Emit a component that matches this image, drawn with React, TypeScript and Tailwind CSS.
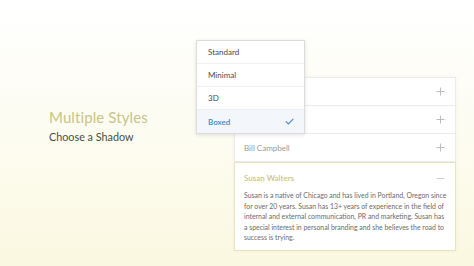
import React from 'react';

const styles = ['Standard', 'Minimal', '3D', 'Boxed'];

const people = [
  { name: 'Tom Hardy', open: false },
  { name: 'Amy Lane', open: false },
  { name: 'Bill Campbell', open: false },
];

const Plus = () => (
  <svg width="9" height="9" viewBox="0 0 9 9" className="text-[#b5b5b5]">
    <path d="M4.5 0.5v8M0.5 4.5h8" stroke="currentColor" strokeWidth="0.9" fill="none" />
  </svg>
);

const Minus = () => (
  <svg width="9" height="9" viewBox="0 0 9 9" className="text-[#c9c9c9]">
    <path d="M0.5 4.5h8" stroke="currentColor" strokeWidth="0.9" fill="none" />
  </svg>
);

const App = () => {
  return (
    <div
      className="relative w-[474px] h-[266px] overflow-hidden bg-gradient-to-b from-white via-[#fdfcf1] to-[#fbf8e0] flex items-start"
      style={{ fontFamily: 'Lato, "Open Sans", sans-serif' }}
    >
      {/* left heading */}
      <div className="w-[234px] pl-[49px] pt-[108px]">
        <h1 className="text-[15px] leading-[19px] text-[#c8c488] tracking-[0.1px]">Multiple Styles</h1>
        <p className="text-[10.8px] leading-[15px] text-[#4d4c3f] mt-[2px]">Choose a Shadow</p>
      </div>

      {/* accordion */}
      <div className="mt-[77px] w-[222px] bg-white border border-[#ececec] shadow-[0_0_4px_rgba(0,0,0,0.04)]">
        {people.map((p, i) => (
          <div key={i} className="h-[28px] flex items-center justify-between pl-[9px] pr-[10px] border-b border-[#ebebeb]">
            <span className="text-[8px] text-[#9a9a9a]">{p.name}</span>
            <Plus />
          </div>
        ))}
        <div className="border border-[#e8e3bb] -mx-px -mb-px pl-[9px] pr-[7px] pt-[9px] pb-[7px]">
          <div className="flex items-center justify-between pr-[3px]">
            <span className="text-[8px] font-semibold text-[#cbc485]">Susan Walters</span>
            <Minus />
          </div>
          <p className="mt-[6px] text-[6.9px] leading-[10.5px] text-[#6b6b6b]">
            Susan is a native of Chicago and has lived in Portland, Oregon since for over 20 years. Susan has 13+ years of experience in the field of internal and external communication, PR and marketing. Susan has a special interest in personal branding and she believes the road to success is trying.
          </p>
        </div>
      </div>

      {/* style dropdown */}
      <div className="absolute left-[196px] top-[40px] w-[109px] bg-white border border-[#dcdcdc] shadow-[0_1px_4px_rgba(0,0,0,0.12)]">
        {styles.map((s, i) => {
          const active = s === 'Boxed';
          return (
            <div
              key={s}
              className={
                'h-[23px] flex items-center justify-between pl-[11px] pr-[10px] text-[8px] ' +
                (i < styles.length - 1 ? 'border-b border-[#efefef] ' : '') +
                (active ? 'bg-[#f3f7fc] text-[#3d86cf] font-semibold' : 'text-[#4a4a4a]')
              }
            >
              <span>{s}</span>
              {active && (
                <svg width="9" height="7" viewBox="0 0 9 7">
                  <path d="M0.8 3.4l2.6 2.5L8.3 0.8" stroke="#4a88c8" strokeWidth="1.1" fill="none" />
                </svg>
              )}
            </div>
          );
        })}
      </div>
    </div>
  );
};

export default App;
